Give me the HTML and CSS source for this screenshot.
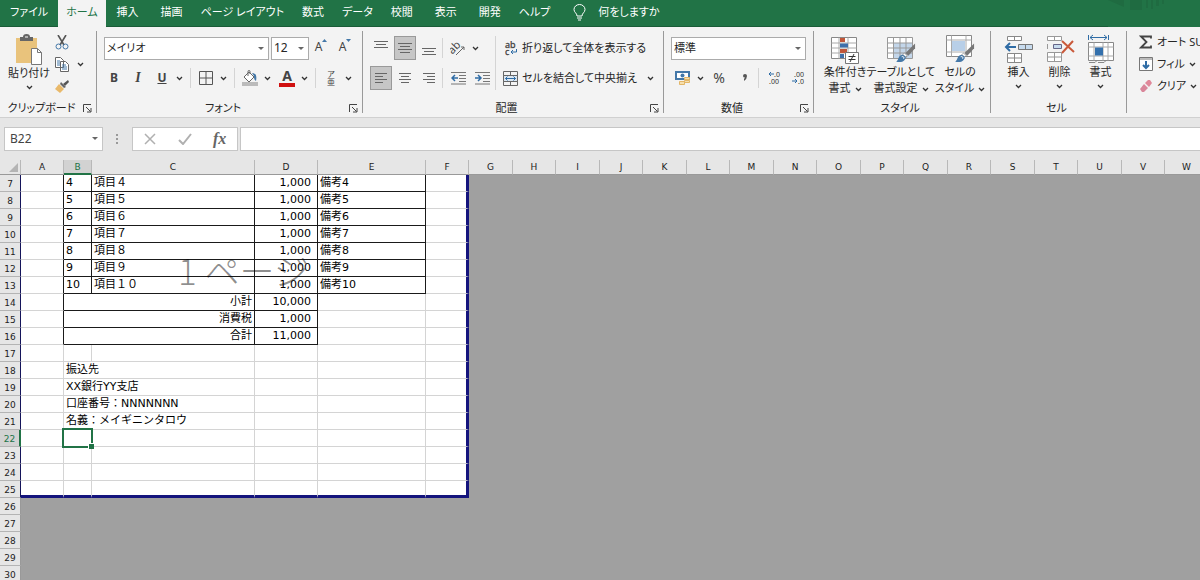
FILE: index.html
```html
<!DOCTYPE html>
<html lang="ja">
<head>
    <meta charset="UTF-8">
    <meta name="viewport" content="width=device-width, initial-scale=1.0">
    <title>請求書 - Excel</title>
    <link rel="stylesheet" href="styles.css">
</head>
<body>
    <svg class="defs" width="0" height="0" aria-hidden="true">
        <symbol id="chev" viewBox="0 0 7 5"><path d="M1 1l2.500 2.500L6 1" fill="none" stroke="#333" stroke-width="1.300"/></symbol>
        <symbol id="launch" viewBox="0 0 9 9"><path d="M8 .5H.5V8M3 3l4.500 4.500M8 4v4H4" fill="none" stroke="#444"/></symbol>
        <symbol id="brush" viewBox="0 0 22 22"><path d="M21 1v5l-7 8-3-3z" fill="#777"/><path d="M10 11l3 3-2 1-3-2z" fill="#fff" stroke="#777" stroke-width=".7"/><path d="M1 20c3-1 2-6 6-7 3 0 5 2 4 4-2 4-7 4-10 3z" fill="#4478a8"/><path d="M7 15c2-1 3 1 2 2" fill="none" stroke="#fff"/></symbol>
    </svg>

    <div class="app">
        <nav class="tabs">
            <a href="#" class="file">ファイル</a>
            <a href="#" class="active">ホーム</a>
            <a href="#">挿入</a>
            <a href="#">描画</a>
            <a href="#" class="kana">ページ レイアウト</a>
            <a href="#">数式</a>
            <a href="#" class="kana">データ</a>
            <a href="#">校閲</a>
            <a href="#">表示</a>
            <a href="#">開発</a>
            <a href="#" class="kana">ヘルプ</a>
            <a href="#" class="tell">
                <svg width="13" height="17" viewBox="0 0 13 17" fill="none" stroke="#fff"><path d="M4 12c0-3-3-3.500-3-6.500a5.500 5 0 0 1 11 0C12 8.500 9 9 9 12zM4 14h5M5 16h3"/></svg>
                何をしますか
            </a>
            <svg class="deco" width="60" height="12" viewBox="0 0 60 12"><path d="M0 0h16v7zM22 0h12v10H22zM38 0h2v8h-2zM43 0h2v9h-2zM48 0h3v6h-3zM54 0h2v4h-2z" fill="#1f6b41"/></svg>
        </nav>

        <div class="ribbon">
            <section class="group clipboard">
                <div class="body">
                    <button class="large">
                        <svg width="28" height="31" viewBox="0 0 28 31"><path d="M1 4h21v25H1z" fill="#e9c37c"/><path d="M5 3h3a3.500 3 0 0 1 7 0h3v4H5z" fill="#666"/><path d="M10 3h3" stroke="#fff"/><path d="M16.500 14.500h6l4 4v12h-10z" fill="#fff" stroke="#777"/><path d="M22.500 14.500v4h4" fill="none" stroke="#777"/></svg>
                        <span>貼り付け</span>
                        <svg class="chev"><use href="#chev"/></svg>
                    </button>
                    <div class="stack">
                        <button aria-label="切り取り"><svg width="14" height="15" viewBox="0 0 14 15" fill="none"><path d="M3 0l6 10M11 0L5 10" stroke="#555" stroke-width="1.600"/><circle cx="3.500" cy="11.500" r="2.500" stroke="#4478a8"/><circle cx="10.500" cy="11.500" r="2.500" stroke="#4478a8"/></svg></button>
                        <button aria-label="コピー"><svg width="14" height="15" viewBox="0 0 14 15" fill="#fff" stroke="#666"><path d="M.5.5h5l3 3v7h-8zM5.500 4.500h5l3 3v7h-8z"/><path d="M2 4h3M2 6h3M2 8h3M7 8h4M7 10h5M7 12h5" stroke="#4478a8"/></svg><svg class="chev"><use href="#chev"/></svg></button>
                        <button aria-label="書式のコピー"><svg width="14" height="13" viewBox="0 0 14 13"><path d="M13 0l1 2-4 4-2-2z" fill="#555"/><path d="M6 2l5 5-2 1-4-4z" fill="#666"/><path d="M4 4l5 5-4 4-5-4z" fill="#e9b96a"/></svg></button>
                    </div>
                </div>
                <footer><span>クリップボード</span><button aria-label="クリップボードの詳細"><svg class="launch"><use href="#launch"/></svg></button></footer>
            </section>

            <section class="group font">
                <div class="body rows">
                    <div class="row">
                        <label class="combo wide"><select aria-label="フォント"><option>メイリオ</option></select></label>
                        <label class="combo size"><select aria-label="フォント サイズ"><option>12</option></select></label>
                        <button class="icon grow" aria-label="拡大">A<svg width="5" height="4" viewBox="0 0 5 4"><path d="M0 3l2.500-3L5 3z" fill="#4478a8"/></svg></button>
                        <button class="icon grow" aria-label="縮小">A<svg width="5" height="4" viewBox="0 0 5 4"><path d="M0 0l2.500 3L5 0z" fill="#4478a8"/></svg></button>
                    </div>
                    <div class="row">
                        <button class="icon bold">B</button>
                        <button class="icon italic">I</button>
                        <button class="icon under">U</button>
                        <button class="drop" aria-label="下線"><svg class="chev"><use href="#chev"/></svg></button>
                        <i class="sep"></i>
                        <button class="icon" aria-label="罫線"><svg width="14" height="14" viewBox="0 0 14 14"><path d="M.5.5h13v13H.5zM7 .5v13M.5 7h13" fill="none" stroke="#555"/></svg></button>
                        <button class="drop" aria-label="罫線の種類"><svg class="chev"><use href="#chev"/></svg></button>
                        <i class="sep"></i>
                        <button class="icon" aria-label="塗りつぶし"><svg width="16" height="16" viewBox="0 0 16 16"><path d="M7 2l5 5-5 5-5-5z" fill="#fff" stroke="#666"/><path d="M6 6V1.500a1 1 0 0 1 2 0V4" fill="none" stroke="#666"/><path d="M10 3c4 0 5 3 4 8-2-1-2-3-2-5z" fill="#4478a8"/><path d="M0 12h16v4H0z" fill="#bbb"/></svg></button>
                        <button class="drop" aria-label="塗りつぶしの色"><svg class="chev"><use href="#chev"/></svg></button>
                        <button class="icon color">A</button>
                        <button class="drop" aria-label="フォントの色"><svg class="chev"><use href="#chev"/></svg></button>
                        <i class="sep"></i>
                        <button class="icon ruby"><span>ア</span><span>亜</span></button>
                        <button class="drop" aria-label="ふりがな"><svg class="chev"><use href="#chev"/></svg></button>
                    </div>
                </div>
                <footer><span>フォント</span><button aria-label="フォントの詳細"><svg class="launch"><use href="#launch"/></svg></button></footer>
            </section>

            <section class="group align">
                <div class="body">
                    <div class="rows">
                        <div class="row">
                            <button class="icon" aria-label="上揃え"><svg class="lines" viewBox="0 0 14 16"><path d="M0 1.500h14M2 4.500h10M0 7.500h14"/></svg></button>
                            <button class="icon on" aria-label="上下中央揃え"><svg class="lines" viewBox="0 0 14 16"><path d="M0 3.500h14M2 6.500h10M0 9.500h14M2 12.500h10"/></svg></button>
                            <button class="icon" aria-label="下揃え"><svg class="lines" viewBox="0 0 14 16"><path d="M0 8.500h14M2 11.500h10M0 14.500h14"/></svg></button>
                            <i class="sep"></i>
                            <button class="icon" aria-label="方向"><svg width="16" height="15" viewBox="0 0 16 15"><text x="-1" y="10" font-size="11" transform="rotate(-45 5 8)" fill="#444">ab</text><path d="M6 14L14 6M14 9V6h-3" fill="none" stroke="#666"/></svg></button>
                            <button class="drop" aria-label="方向の種類"><svg class="chev"><use href="#chev"/></svg></button>
                        </div>
                        <div class="row">
                            <button class="icon on" aria-label="左揃え"><svg class="lines" viewBox="0 0 14 16"><path d="M1 3.500h12M1 6.500h8M1 9.500h12M1 12.500h8"/></svg></button>
                            <button class="icon" aria-label="中央揃え"><svg class="lines" viewBox="0 0 14 16"><path d="M1 3.500h12M3 6.500h8M1 9.500h12M3 12.500h8"/></svg></button>
                            <button class="icon" aria-label="右揃え"><svg class="lines" viewBox="0 0 14 16"><path d="M1 3.500h12M5 6.500h8M1 9.500h12M5 12.500h8"/></svg></button>
                            <i class="sep"></i>
                            <button class="icon" aria-label="インデントを減らす"><svg width="15" height="14" viewBox="0 0 15 14" fill="none"><path d="M0 1.500h15M8 4.500h7M8 7.500h7M8 10.500h7M0 13h15" stroke="#777"/><path d="M7 7H1M4 4L1 7l3 3" stroke="#2f6ca5" stroke-width="1.500"/></svg></button>
                            <button class="icon" aria-label="インデントを増やす"><svg width="15" height="14" viewBox="0 0 15 14" fill="none"><path d="M0 1.500h15M8 4.500h7M8 7.500h7M8 10.500h7M0 13h15" stroke="#777"/><path d="M0 7h6M3 4l3 3-3 3" stroke="#2f6ca5" stroke-width="1.500"/></svg></button>
                        </div>
                    </div>
                    <i class="sep tall"></i>
                    <div class="rows">
                        <div class="row">
                            <button class="text"><svg width="15" height="15" viewBox="0 0 15 15"><text x="2" y="7" font-size="9" fill="#444" stroke="#444" stroke-width=".3">ab</text><text x="2" y="14" font-size="9" fill="#444" stroke="#444" stroke-width=".3">c</text><path d="M13.500 8v3H8M10 9l-2 2 2 2" fill="none" stroke="#2f6ca5"/></svg>折り返して全体を表示する</button>
                        </div>
                        <div class="row">
                            <button class="text"><svg width="15" height="15" viewBox="0 0 15 15" fill="none"><path d="M.5.5h14v14H.5zM7.500.5v4M7.500 10.500v4" stroke="#666"/><path d="M.5 4.500h14v6H.5z" fill="#dbe7f2" stroke="#666"/><path d="M2.500 7.500h10M4.500 5.500l-2 2 2 2M10.500 5.500l2 2-2 2" stroke="#2f6ca5"/></svg>セルを結合して中央揃え<svg class="chev"><use href="#chev"/></svg></button>
                        </div>
                    </div>
                </div>
                <footer><span>配置</span><button aria-label="配置の詳細"><svg class="launch"><use href="#launch"/></svg></button></footer>
            </section>

            <section class="group number">
                <div class="body rows">
                    <div class="row">
                        <label class="combo format"><select aria-label="表示形式"><option>標準</option></select></label>
                    </div>
                    <div class="row">
                        <button class="icon" aria-label="通貨"><svg width="16" height="15" viewBox="0 0 16 15"><path d="M1 1h13v7H1z" fill="#fff" stroke="#4478a8" stroke-width="2"/><circle cx="7.500" cy="4.500" r="2" fill="#4478a8"/><path d="M9.500 6.500h5v2h-5zM9.500 9.500h5v2h-5zM4.500 10.500h5v3h-5z" fill="#f6dfae" stroke="#e3b667"/></svg></button>
                        <button class="drop" aria-label="通貨の種類"><svg class="chev"><use href="#chev"/></svg></button>
                        <button class="icon percent">%</button>
                        <button class="icon comma" aria-label="桁区切り"><svg width="5" height="8" viewBox="0 0 5 8"><path d="M0 2a2 2 0 0 1 4 0q0 3-3 5V5l1-1.500Q0 3.500 0 2" fill="#555"/></svg></button>
                        <i class="sep"></i>
                        <button class="icon" aria-label="小数点以下を増やす"><svg class="digits" width="13" height="14" viewBox="0 0 13 14"><text x="6" y="6">.0</text><text x="1" y="13">.00</text><path d="M6 3H1M3 1L1 3l2 2"/></svg></button>
                        <button class="icon" aria-label="小数点以下を減らす"><svg class="digits" width="13" height="14" viewBox="0 0 13 14"><text x="2" y="6">.00</text><text x="6" y="13">.0</text><path d="M0 10h5M3 8l2 2-2 2"/></svg></button>
                    </div>
                </div>
                <footer><span>数値</span><button aria-label="数値の詳細"><svg class="launch"><use href="#launch"/></svg></button></footer>
            </section>

            <section class="group styles">
                <div class="body">
                    <button class="large">
                        <svg width="30" height="30" viewBox="0 0 30 30"><path d="M1.500 3.500h25v21h-25z" fill="#fff" stroke="#888"/><path d="M9 3.500v21M18 3.500v21M1.500 9h25M1.500 14h25M1.500 19h25" stroke="#aaa"/><path d="M10 4h5v4h-5zM10 15h7v4h-7z" fill="#c1573a"/><path d="M10 9.500h8v4h-8zM10 20h4v4h-4z" fill="#3f70ab"/><path d="M15.500 18.500h13v11h-13z" fill="#fff" stroke="#777"/><path d="M18.500 22.500h7M18.500 25.500h7M24 20l-4 8" stroke="#333"/></svg>
                        <span>条件付き</span>
                        <span>書式<svg class="chev"><use href="#chev"/></svg></span>
                    </button>
                    <button class="large">
                        <svg width="30" height="30" viewBox="0 0 30 30"><path d="M1.500 3.500h25v21h-25z" fill="#fff"/><path d="M8 9h18v15H8z" fill="#c3d6ea"/><path d="M1.500 3.500h25v21h-25zM7.500 3.500v21M14 3.500v21M20 3.500v21M1.500 9h25M1.500 14h25M1.500 19h25" fill="none" stroke="#999"/><use href="#brush" x="9" y="8" width="21" height="22"/></svg>
                        <span>テーブルとして</span>
                        <span>書式設定<svg class="chev"><use href="#chev"/></svg></span>
                    </button>
                    <button class="large">
                        <svg width="30" height="30" viewBox="0 0 30 30"><path d="M1.500 1.500h25v21h-25z" fill="#fff" stroke="#888"/><path d="M6.500 1.500v21M21 1.500v21M1.500 6h25M1.500 18h25" stroke="#aaa"/><path d="M7 7h13v10H7z" fill="#b8cfe8"/><use href="#brush" x="9" y="8" width="21" height="22"/></svg>
                        <span>セルの</span>
                        <span>スタイル<svg class="chev"><use href="#chev"/></svg></span>
                    </button>
                </div>
                <footer><span>スタイル</span></footer>
            </section>

            <section class="group cells">
                <div class="body">
                    <button class="large">
                        <svg width="30" height="30" viewBox="0 0 30 30"><path d="M3.500 2.500h14v4h-14zM10.500 2.500v4M3.500 19.500h14v9h-14zM10.500 19.500v9M3.500 24h14" fill="#fff" stroke="#888"/><path d="M14.500 10.500h14v5h-14zM21.500 10.500v5" fill="#c7dbee" stroke="#777"/><path d="M12 13H2M6 9l-4 4 4 4" fill="none" stroke="#2f6ca5" stroke-width="2"/></svg>
                        <span>挿入</span>
                        <svg class="chev"><use href="#chev"/></svg>
                    </button>
                    <button class="large">
                        <svg width="30" height="30" viewBox="0 0 30 30"><path d="M2.500 2.500h14v4h-14zM9.500 2.500v4M2.500 18.500h14v9h-14zM9.500 18.500v9M2.500 23h14M2.500 10v5" fill="#fff" stroke="#999"/><path d="M8.500 10.500h8v4h-8z" fill="#c7dbee" stroke="#668"/><path d="M17 7l12 11M28 7L17 19" fill="none" stroke="#c9593a" stroke-width="2"/></svg>
                        <span>削除</span>
                        <svg class="chev"><use href="#chev"/></svg>
                    </button>
                    <button class="large">
                        <svg width="30" height="30" viewBox="0 0 30 30"><path d="M2.500 8.500h25v18h-25z" fill="#fff" stroke="#888"/><path d="M8 8.500v18M17 8.500v18M22 8.500v18M2.500 13h25M2.500 22h25" stroke="#aaa"/><path d="M9 13.500h8v8H9z" fill="#3470ac"/><path d="M4 3.500h17M7 1L4 3.500 7 6M18 1l3 2.500L18 6M2.500 1v5M22.500 1v5" fill="none" stroke="#2f6ca5"/><path d="M3 28.500h6l2-2M12 28.500h6l2-2" fill="none" stroke="#888"/></svg>
                        <span>書式</span>
                        <svg class="chev"><use href="#chev"/></svg>
                    </button>
                </div>
                <footer><span>セル</span></footer>
            </section>

            <section class="group edit">
                <div class="body stack">
                    <button class="text"><svg width="14" height="14" viewBox="0 0 14 14"><path d="M12 3.500V1.500H2L7.500 7 2 12.500h10v-2" fill="none" stroke="#444" stroke-width="1.800"/></svg>オート SUM</button>
                    <button class="text"><svg width="14" height="14" viewBox="0 0 14 14"><path d="M.5.5h13v13H.5z" fill="#fff" stroke="#777"/><path d="M1 2h12" stroke="#777"/><path d="M7 4v7M4 8l3 3 3-3" fill="none" stroke="#2f6ca5" stroke-width="2"/></svg>フィル<svg class="chev"><use href="#chev"/></svg></button>
                    <button class="text"><svg width="14" height="14" viewBox="0 0 14 14"><path d="M9 1h2l2 3-3 4-4-4z" fill="#e0889a"/><path d="M5 5l4 4-4 4H3L1 10z" fill="#d9869a"/></svg>クリア<svg class="chev"><use href="#chev"/></svg></button>
                </div>
            </section>
        </div>

        <div class="formula-bar">
            <label class="combo name"><select aria-label="名前ボックス"><option>B22</option></select></label>
            <svg class="dots" width="3" height="11" viewBox="0 0 3 11"><path d="M0 0h2v2H0zM0 4h2v2H0zM0 8h2v2H0z" fill="#999"/></svg>
            <div class="tools">
                <button aria-label="キャンセル"><svg width="12" height="12" viewBox="0 0 12 12"><path d="M1 1l10 10M11 1L1 11" fill="none" stroke="#b0b0b0" stroke-width="1.500"/></svg></button>
                <button aria-label="入力"><svg width="14" height="12" viewBox="0 0 14 12"><path d="M1 7l4 4 8-10" fill="none" stroke="#b0b0b0" stroke-width="2"/></svg></button>
                <button class="fx">fx</button>
            </div>
            <input type="text" class="formula" aria-label="数式バー">
        </div>

        <main class="sheet">
            <table>
                <colgroup>
                    <col class="head"><col class="a"><col class="b"><col class="c"><col class="d"><col class="e"><col class="f">
                    <col><col><col><col><col><col><col><col><col><col><col><col><col><col><col><col><col>
                </colgroup>
                <thead>
                    <tr>
                        <th class="corner"><svg width="9" height="9" viewBox="0 0 9 9"><path d="M9 0v9H0z" fill="#b4b4b4"/></svg></th>
                        <th>A</th><th class="sel">B</th><th>C</th><th>D</th><th>E</th><th>F</th>
                        <th>G</th><th>H</th><th>I</th><th>J</th><th>K</th><th>L</th><th>M</th><th>N</th><th>O</th><th>P</th><th>Q</th><th>R</th><th>S</th><th>T</th><th>U</th><th>V</th><th>W</th>
                    </tr>
                </thead>
                <tbody class="items">
                    <tr><th>7</th><td></td><td>4</td><td>項目４</td><td class="num">1,000</td><td>備考4</td><td></td></tr>
                    <tr><th>8</th><td></td><td>5</td><td>項目５</td><td class="num">1,000</td><td>備考5</td><td></td></tr>
                    <tr><th>9</th><td></td><td>6</td><td>項目６</td><td class="num">1,000</td><td>備考6</td><td></td></tr>
                    <tr><th>10</th><td></td><td>7</td><td>項目７</td><td class="num">1,000</td><td>備考7</td><td></td></tr>
                    <tr><th>11</th><td></td><td>8</td><td>項目８</td><td class="num">1,000</td><td>備考8</td><td></td></tr>
                    <tr><th>12</th><td></td><td>9</td><td>項目９</td><td class="num">1,000</td><td>備考9</td><td></td></tr>
                    <tr><th>13</th><td></td><td>10</td><td>項目１０</td><td class="num">1,000</td><td>備考10</td><td></td></tr>
                </tbody>
                <tbody class="totals">
                    <tr><th>14</th><td></td><td colspan="2">小計</td><td class="num">10,000</td><td></td><td></td></tr>
                    <tr><th>15</th><td></td><td colspan="2">消費税</td><td class="num">1,000</td><td></td><td></td></tr>
                    <tr><th>16</th><td></td><td colspan="2">合計</td><td class="num">11,000</td><td></td><td></td></tr>
                </tbody>
                <tbody class="notes">
                    <tr><th>17</th><td></td><td></td><td></td><td></td><td></td><td></td></tr>
                    <tr><th>18</th><td></td><td colspan="2">振込先</td><td></td><td></td><td></td></tr>
                    <tr><th>19</th><td></td><td colspan="2">XX銀行YY支店</td><td></td><td></td><td></td></tr>
                    <tr><th>20</th><td></td><td colspan="2">口座番号：NNNNNNN</td><td></td><td></td><td></td></tr>
                    <tr><th>21</th><td></td><td colspan="2">名義：メイギニンタロウ</td><td></td><td></td><td></td></tr>
                    <tr><th class="sel">22</th><td></td><td class="cursor"></td><td></td><td></td><td></td><td></td></tr>
                    <tr><th>23</th><td></td><td></td><td></td><td></td><td></td><td></td></tr>
                    <tr><th>24</th><td></td><td></td><td></td><td></td><td></td><td></td></tr>
                    <tr class="last"><th>25</th><td></td><td></td><td></td><td></td><td></td><td></td></tr>
                </tbody>
                <tbody class="outside">
                    <tr><th>26</th></tr>
                    <tr><th>27</th></tr>
                    <tr><th>28</th></tr>
                    <tr><th>29</th></tr>
                    <tr><th>30</th></tr>
                </tbody>
            </table>
            <div class="watermark">1 ページ</div>
        </main>
    </div>
</body>
</html>
```
FILE: styles.css
```css
* {
    box-sizing: border-box;
}
body {
    margin: 0;
    font-family: "Noto Sans", "Noto Sans CJK JP", sans-serif;
    font-size: 11px;
    line-height: 16px;
    color: #262626;
    overflow: hidden;
}
.app {
    display: flex;
    flex-direction: column;
    height: 100vh;
}
.defs {
    position: absolute;
}
button, select, input {
    font: inherit;
    color: inherit;
    border: none;
    background: none;
    padding: 0;
    margin: 0;
}
svg {
    flex: none;
}

/* Tabs */
.tabs {
    display: flex;
    flex: none;
    height: 27px;
    background-color: #217346;
    font-feature-settings: "palt";
}
.tabs a {
    display: flex;
    align-items: center;
    padding: 0 11px 2px;
    color: #fff;
    text-decoration: none;
    white-space: nowrap;
    border-bottom: 1px solid #1a5c38;
}
.tabs .file {
    padding: 0 10px 2px;
}
.tabs .active {
    padding: 0 8px 2px;
    background-color: #f3f3f3;
    color: #217346;
    border-bottom-color: #f3f3f3;
}
.tabs .kana {
    padding: 0 7px 2px;
}
.tabs .tell {
    flex: 1;
    gap: 12px;
    padding-left: 16px;
}
.deco {
    margin-right: 32px;
}

/* Ribbon */
.ribbon {
    display: flex;
    flex: none;
    height: 91px;
    padding-top: 4px;
    background-color: #f3f3f3;
    border-bottom: 1px solid #d0d0d0;
    font-feature-settings: "palt";
    overflow: hidden;
}
.group {
    display: flex;
    flex-direction: column;
    flex: none;
    height: 82px;
    border-right: 1px solid #999;
}
.body {
    display: flex;
    flex: 1;
    min-height: 0;
}
.group footer {
    display: flex;
    align-items: center;
    height: 10px;
    padding-right: 4px;
}
.group footer span {
    flex: 1;
    text-align: center;
}
.clipboard { width: 97px; }
.font { width: 266px; }
.align { width: 301px; }
.number { width: 150px; }
.styles { width: 177px; }
.cells { width: 136px; }
.group.edit {
    flex: 1;
    min-width: 0;
    border: none;
}
.chev {
    width: 7px;
    height: 5px;
}
.launch {
    display: block;
    width: 9px;
    height: 9px;
}
.large {
    display: flex;
    flex-direction: column;
    align-items: center;
    white-space: nowrap;
}
.large span {
    line-height: 16px;
}
.large span .chev {
    margin-left: 4px;
    vertical-align: middle;
}
.large > .chev {
    margin-top: 4px;
}
.clipboard .large {
    width: 44px;
    margin-left: 7px;
    padding-top: 3px;
}
.stack {
    display: flex;
    flex-direction: column;
}
.stack button {
    display: flex;
    align-items: center;
    gap: 8px;
    height: 22px;
}
.clipboard .stack {
    padding-left: 4px;
}
.rows {
    display: flex;
    flex-direction: column;
    gap: 6px;
    padding-top: 5px;
}
.row {
    display: flex;
    align-items: center;
    height: 24px;
}
.font .rows {
    padding-left: 5px;
}
.icon {
    display: flex;
    align-items: center;
    justify-content: center;
    width: 24px;
    height: 24px;
    font-size: 12px;
    color: #444;
}
.icon.on {
    width: 22px;
    margin: 0 1px;
    background-color: #c6c6c6;
    border: 1px solid #999;
}
.drop {
    display: flex;
    align-items: center;
    justify-content: center;
    width: 10px;
    height: 24px;
}
.sep {
    width: 1px;
    height: 20px;
    margin: 0 3px 0 6px;
    background-color: #d4d4d4;
}
.align .sep,
.number .sep {
    margin: 0 3px 0 1px;
}
.align .sep.tall {
    height: 54px;
    margin: 5px 7px 0 1px;
}
.combo {
    position: relative;
    height: 23px;
    background-color: #fff;
    border: 1px solid #ababab;
}
.combo select {
    display: block;
    width: 100%;
    height: 21px;
    padding-left: 2px;
    appearance: none;
    outline: none;
}
.combo::after {
    content: "";
    position: absolute;
    top: 9px;
    right: 4px;
    border: 3px solid transparent;
    border-top-color: #666;
    pointer-events: none;
}
.wide {
    width: 165px;
    margin: 0 2px;
}
.size {
    width: 38px;
    font-size: 12px;
}
.format {
    width: 135px;
}
.grow {
    align-items: flex-start;
    padding-top: 3px;
}
.bold, .under, .italic {
    font-weight: bold;
}
.italic {
    font-family: "Liberation Serif", serif;
    font-style: italic;
    font-size: 14px;
}
.under {
    text-decoration: underline;
}
.color {
    height: 17px;
    width: 16px;
    margin: 0 4px 0 7px;
    font-size: 14px;
    font-weight: bold;
    border-bottom: 4px solid #d01010;
}
.ruby {
    flex-direction: column;
    font-size: 8px;
    line-height: 8px;
}
.lines {
    width: 14px;
    height: 16px;
    stroke: #666;
}
.text {
    display: flex;
    align-items: center;
    gap: 4px;
    white-space: nowrap;
}
.align .text .chev {
    margin-left: 6px;
}
.align .rows {
    padding-left: 6px;
}
.align .sep.tall + .rows {
    padding-left: 0;
}
.number .rows {
    padding-left: 7px;
}
.percent {
    font-size: 14px;
    width: 28px;
}
.digits {
    font-size: 7px;
    fill: #333;
}
.digits path {
    fill: none;
    stroke: #2f6ca5;
}
.styles .body {
    padding: 3px 0 0 8px;
}
.styles .large:nth-child(1) { width: 46px; }
.styles .large:nth-child(2) { width: 66px; }
.styles .large:nth-child(3) { width: 52px; }
.cells .body {
    padding: 3px 0 0 7px;
}
.cells .large {
    width: 41px;
}
.edit .stack {
    flex: none;
    padding-left: 12px;
}
.edit .text {
    gap: 4px;
}

/* Formula bar */
.formula-bar {
    display: flex;
    flex: none;
    align-items: flex-start;
    height: 42px;
    padding: 9px 0 0 4px;
    background-color: #e6e6e6;
}
.name {
    width: 99px;
    height: 24px;
    border-color: #c6c6c6;
    font-size: 12px;
    color: #444;
}
.name select {
    padding-left: 5px;
}
.dots {
    margin: 7px 13px 0 13px;
}
.tools {
    display: flex;
    width: 106px;
    height: 24px;
    background-color: #fff;
    border: 1px solid #c6c6c6;
}
.tools button {
    display: flex;
    flex: 1;
    align-items: center;
    justify-content: center;
}
.tools .fx {
    font: italic bold 16px "Liberation Serif", serif;
    color: #666;
}
.formula {
    flex: 1;
    height: 24px;
    margin-left: 2px;
    background-color: #fff;
    border: 1px solid #c6c6c6;
    border-right: none;
}

/* Sheet */
.sheet {
    position: relative;
    flex: 1;
    min-height: 0;
    overflow: hidden;
    background-color: #a0a0a0;
}
table {
    width: 1209px;
    table-layout: fixed;
    border-collapse: separate;
    border-spacing: 0;
}
col:nth-child(even) { width: 44px; }
col:nth-child(odd) { width: 43px; }
col.head { width: 21px; }
col.a { width: 43px; }
col.b { width: 28px; }
col.c { width: 163px; }
col.d { width: 63px; }
col.e { width: 108px; }
col.f { width: 43px; }
th {
    height: 17px;
    padding: 2px 0 0;
    font: 9px/12px "DejaVu Sans", sans-serif;
    color: #222;
    background-color: #e6e6e6;
    border-bottom: 1px solid #b4b4b4;
    border-right: 1px solid #14145a;
}
thead th {
    height: 15px;
    padding: 0;
    border-right-color: #b8b8b8;
    border-bottom-color: #999;
}
thead .corner {
    text-align: right;
    vertical-align: bottom;
    padding: 0 2px 2px 0;
}
.corner svg {
    display: block;
    margin-left: auto;
}
.outside th {
    border-right-color: #999;
}
th.sel {
    background-color: #d2d2d2;
    color: #217346;
}
thead th.sel {
    border-bottom: 2px solid #217346;
}
tbody th.sel {
    border-right: 2px solid #217346;
}
td {
    height: 17px;
    padding: 1px 2px;
    font: 11px/14px "DejaVu Sans", "Noto Sans CJK JP", sans-serif;
    color: #000;
    white-space: nowrap;
    background-color: #fff;
    border-right: 1px solid #d4d4d4;
    border-bottom: 1px solid #d4d4d4;
}
td:last-child {
    border-right: 3px solid #14147d;
}
.num {
    text-align: right;
    padding-right: 6px;
}
.items td:nth-child(n+3):nth-child(-n+6),
.totals td:nth-child(3),
.totals td:nth-child(4) {
    border-color: #1a1a1a;
}
.items td:nth-child(2),
.totals td:nth-child(2) {
    border-right-color: #1a1a1a;
}
.totals td:nth-child(3) {
    text-align: right;
}
.last td {
    border-bottom: 3px solid #14147d;
}
.cursor {
    position: relative;
}
.cursor::before {
    content: "";
    position: absolute;
    inset: -2px -2px -2px -2px;
    border: 2px solid #217346;
}
.cursor::after {
    content: "";
    position: absolute;
    right: -3px;
    bottom: -3px;
    width: 5px;
    height: 5px;
    background-color: #217346;
    border: 1px solid #fff;
    border-right: none;
    border-bottom: none;
}
/* page number laid over the cells in page break preview */
.watermark {
    position: absolute;
    left: 178px;
    top: 90px;
    font-family: "Noto Sans CJK JP", sans-serif;
    font-size: 35px;
    font-weight: 300;
    line-height: 40px;
    color: rgba(0, 0, 0, 0.45);
    pointer-events: none;
}
```
